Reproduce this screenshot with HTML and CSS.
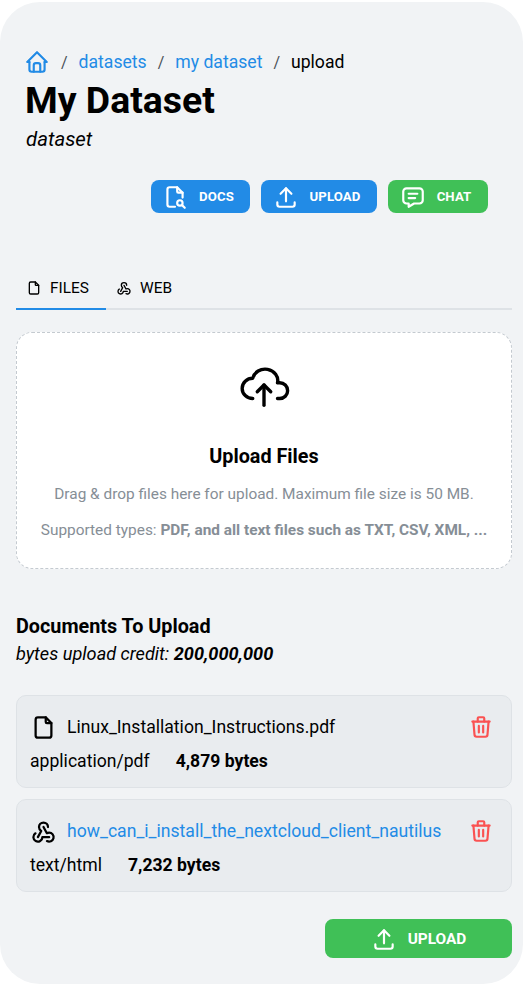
FILE: index.html
```html
<!DOCTYPE html>
<html lang="en">
<head>
<meta charset="utf-8">
<title>Upload</title>
<link rel="stylesheet" href="styles.css">
</head>
<body>
<svg width="0" height="0" class="defs">
  <symbol id="i-home" viewBox="0 0 24 24"><path d="M5 12l-2 0l9 -9l9 9l-2 0"/><path d="M5 12v7a2 2 0 0 0 2 2h10a2 2 0 0 0 2 -2v-7"/><path d="M9 21v-6a2 2 0 0 1 2 -2h2a2 2 0 0 1 2 2v6"/></symbol>
  <symbol id="i-docs" viewBox="0 0 24 24"><path d="M14 3v4a1 1 0 0 0 1 1h4"/><path d="M12 21h-5a2 2 0 0 1 -2 -2v-14a2 2 0 0 1 2 -2h7l5 5v4.5"/><path d="M16.5 17.5m-2.5 0a2.5 2.5 0 1 0 5 0a2.5 2.5 0 1 0 -5 0"/><path d="M18.5 19.5l2.5 2.5"/></symbol>
  <symbol id="i-upload" viewBox="0 0 24 24"><path d="M4 17v2a2 2 0 0 0 2 2h12a2 2 0 0 0 2 -2v-2"/><path d="M7 9l5 -5l5 5"/><path d="M12 4l0 12"/></symbol>
  <symbol id="i-chat" viewBox="0 0 24 24"><path d="M8 9h8"/><path d="M8 13h6"/><path d="M18 4a3 3 0 0 1 3 3v8a3 3 0 0 1 -3 3h-5l-5 3v-3h-2a3 3 0 0 1 -3 -3v-8a3 3 0 0 1 3 -3h12z"/></symbol>
  <symbol id="i-file" viewBox="0 0 24 24"><path d="M14 3v4a1 1 0 0 0 1 1h4"/><path d="M17 21h-10a2 2 0 0 1 -2 -2v-14a2 2 0 0 1 2 -2h7l5 5v11a2 2 0 0 1 -2 2z"/></symbol>
  <symbol id="i-web" viewBox="0 0 24 24"><path d="M4.876 13.61a4 4 0 1 0 6.124 3.39h6"/><path d="M15.066 20.502a4 4 0 1 0 1.934 -7.502c-.706 0 -1.424 .179 -2 .5l-3 -5.5"/><path d="M16 8a4 4 0 1 0 -8 0c0 1.506 .77 2.818 2 3.5l-3 5.5"/></symbol>
  <symbol id="i-cloud" viewBox="0 0 24 24"><path d="M7 18a4.6 4.4 0 0 1 0 -9a5 4.5 0 0 1 11 2h1a3.5 3.5 0 0 1 0 7h-1"/><path d="M9 15l3 -3l3 3"/><path d="M12 12l0 9"/></symbol>
  <symbol id="i-trash" viewBox="0 0 24 24"><path d="M4 7l16 0"/><path d="M10 11l0 6"/><path d="M14 11l0 6"/><path d="M5 7l1 12a2 2 0 0 0 2 2h8a2 2 0 0 0 2 -2l1 -12"/><path d="M9 7v-3a1 1 0 0 1 1 -1h4a1 1 0 0 1 1 1v3"/></symbol>
</svg>
<main class="screen">
  <nav class="crumbs">
    <a class="crumb-home"><svg class="icon ic-home"><use href="#i-home"/></svg></a>
    <span class="sep">/</span>
    <a class="link">datasets</a>
    <span class="sep">/</span>
    <a class="link">my dataset</a>
    <span class="sep">/</span>
    <span class="current">upload</span>
  </nav>
  <h1 class="title">My Dataset</h1>
  <p class="subtitle">dataset</p>

  <div class="actions">
    <a class="btn btn-blue btn-docs"><svg class="icon ic-btn"><use href="#i-docs"/></svg><span>Docs</span></a>
    <a class="btn btn-blue btn-up"><svg class="icon ic-btn"><use href="#i-upload"/></svg><span>Upload</span></a>
    <a class="btn btn-green btn-chat"><svg class="icon ic-btn"><use href="#i-chat"/></svg><span>Chat</span></a>
  </div>

  <div class="tabs">
    <div class="tab tab-active"><svg class="icon ic-tab"><use href="#i-file"/></svg><span>FILES</span></div>
    <div class="tab"><svg class="icon ic-tab"><use href="#i-web"/></svg><span>WEB</span></div>
  </div>

  <section class="drop">
    <svg class="icon ic-cloud"><use href="#i-cloud"/></svg>
    <h2 class="drop-title">Upload Files</h2>
    <p class="drop-text">Drag &amp; drop files here for upload. Maximum file size is 50 MB.</p>
    <p class="drop-text drop-types">Supported types: <b>PDF, and all text files such as TXT, CSV, XML, ...</b></p>
  </section>

  <h3 class="docs-title">Documents To Upload</h3>
  <p class="credit">bytes upload credit: <b>200,000,000</b></p>

  <div class="docs">
    <article class="doc">
      <div class="doc-row">
        <svg class="icon ic-doc"><use href="#i-file"/></svg>
        <span class="doc-name">Linux_Installation_Instructions.pdf</span>
        <svg class="icon ic-trash"><use href="#i-trash"/></svg>
      </div>
      <div class="doc-meta"><span>application/pdf</span><b>4,879 bytes</b></div>
    </article>
    <article class="doc">
      <div class="doc-row">
        <svg class="icon ic-doc"><use href="#i-web"/></svg>
        <a class="doc-name link">how_can_i_install_the_nextcloud_client_nautilus</a>
        <svg class="icon ic-trash"><use href="#i-trash"/></svg>
      </div>
      <div class="doc-meta"><span>text/html</span><b>7,232 bytes</b></div>
    </article>
  </div>

  <div class="submit-row">
    <a class="btn btn-green btn-submit"><svg class="icon ic-btn"><use href="#i-upload"/></svg><span>Upload</span></a>
  </div>
</main>
</body>
</html>
```
FILE: styles.css
```css
* { box-sizing: border-box; }
html, body { margin: 0; padding: 0; background: #fff; }
body { font-family: Roboto, "Liberation Sans", sans-serif; color: #000; height: 984px; overflow: hidden; }
.defs { position: absolute; }
.icon { fill: none; stroke: currentColor; stroke-width: 2; stroke-linecap: round; stroke-linejoin: round; flex: none; display: block; }
.screen { margin-top: 2px; height: 982px; background: #f1f3f5; border-radius: 40px; padding: 45px 11px 0 16px; overflow: hidden; }
.crumbs { display: flex; align-items: center; height: 30px; font-size: 17.6px; }
.crumb-home { color: #228be6; margin-left: 8px; display: block; }
.ic-home { width: 26px; height: 26px; }
.sep { color: #495057; margin: 0 11px; font-size: 16px; }
.link { color: #228be6; }
.title { font-size: 37.4px; font-weight: 700; line-height: 44px; margin: 1px 0 0 9px; }
.subtitle { font-style: italic; font-size: 20.4px; line-height: 28px; margin: 3px 0 0 10px; }
.actions { display: flex; justify-content: flex-end; gap: 11px; margin: 27px 24px 0 0; }
.btn { display: flex; align-items: center; justify-content: center; gap: 11px; color: #fff; font-weight: 700; font-size: 13.2px; letter-spacing: 0.1px; text-transform: uppercase; height: 33px; border-radius: 8px; }
.btn-blue { background: #228be6; }
.btn-green { background: #40c057; }
.btn-docs { width: 99px; padding-right: 5px; }
.btn-up { width: 116px; padding-right: 5px; }
.btn-chat { width: 100px; padding-right: 5px; }
.ic-btn { width: 26px; height: 26px; }
.tabs { display: flex; margin-top: 57px; border-bottom: 2px solid #dee2e6; height: 40px; }
.tab { display: flex; align-items: center; gap: 8px; font-size: 15.4px; height: 40px; padding: 0 10px 3px; margin-bottom: -2px; border-bottom: 2px solid transparent; }
.tab-active { border-bottom-color: #228be6; width: 90px; }
.ic-tab { width: 16px; height: 16px; }
.drop { margin-top: 22px; height: 237px; background: #fff; border: 1px dashed #c4cad0; border-radius: 16px; display: flex; flex-direction: column; align-items: center; padding-top: 25px; }
.ic-cloud { width: 54px; height: 54px; stroke-width: 1.5; }
.drop-title { font-size: 19.8px; font-weight: 700; line-height: 28px; margin: 31px 0 0; }
.drop-text { color: #868e96; font-size: 15.4px; line-height: 22px; margin: 12px 0 0; white-space: nowrap; }
.drop-types { margin-top: 14px; }
.docs-title { font-size: 19.8px; font-weight: 700; line-height: 28px; margin: 44px 0 0; }
.credit { font-style: italic; font-size: 18.15px; line-height: 26px; margin: 0; }
.credit b { font-weight: 700; }
.docs { display: flex; flex-direction: column; gap: 11px; margin-top: 28px; }
.doc { height: 93px; background: #e9ecef; border: 1px solid #dee2e6; border-radius: 10px; padding: 16px 17px 0 13px; }
.doc-row { display: flex; align-items: center; height: 30px; }
.ic-doc { width: 27px; height: 27px; }
.doc-name { flex: 1; font-size: 17.6px; margin-left: 10px; white-space: nowrap; }
.ic-trash { width: 26px; height: 26px; color: #fa5252; }
.doc-meta { display: flex; gap: 26px; font-size: 17.6px; line-height: 26px; margin-top: 6px; }
.doc-meta b { font-weight: 700; }
.submit-row { display: flex; justify-content: flex-end; margin-top: 27px; }
.btn-submit { width: 187px; height: 39px; font-size: 15.4px; letter-spacing: 0; }
```
